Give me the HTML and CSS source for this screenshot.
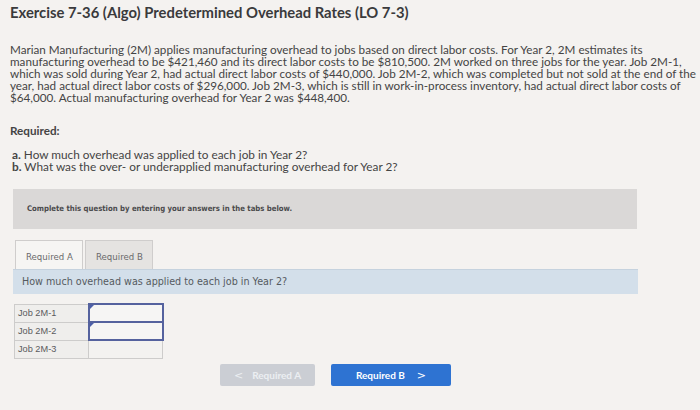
FILE: index.html
```html
<!DOCTYPE html>
<html>
<head>
<meta charset="utf-8">
<link rel="stylesheet" href="styles.css">
</head>
<body>
<div class="page">
  <h1 class="title">Exercise 7-36 (Algo) Predetermined Overhead Rates (LO 7-3)</h1>
  <p class="intro">Marian Manufacturing (2M) applies manufacturing overhead to jobs based on direct labor costs. For Year 2, 2M estimates its<br>manufacturing overhead to be $421,460 and its direct labor costs to be $810,500. 2M worked on three jobs for the year. Job 2M-1,<br>which was sold during Year 2, had actual direct labor costs of $440,000. Job 2M-2, which was completed but not sold at the end of the<br>year, had actual direct labor costs of $296,000. Job 2M-3, which is still in work-in-process inventory, had actual direct labor costs of<br>$64,000. Actual manufacturing overhead for Year 2 was $448,400.</p>
  <p class="req">Required:</p>
  <ul class="qlist">
    <li><b>a.</b> How much overhead was applied to each job in Year 2?</li>
    <li><b>b.</b> What was the over- or underapplied manufacturing overhead for Year 2?</li>
  </ul>
  <div class="notice">Complete this question by entering your answers in the tabs below.</div>
  <div class="tabs">
    <div class="tab active">Required A</div>
    <div class="tab">Required B</div>
  </div>
  <div class="prompt">How much overhead was applied to each job in Year 2?</div>
  <table class="grid">
    <tr><td class="lbl">Job 2M-1</td><td class="inp focus"><span class="mark"></span></td></tr>
    <tr><td class="lbl">Job 2M-2</td><td class="inp focus"><span class="mark"></span></td></tr>
    <tr><td class="lbl">Job 2M-3</td><td class="inp"></td></tr>
  </table>
  <div class="nav">
    <div class="btn disabled"><span class="chev">&lt;</span>Required A</div>
    <div class="btn primary">Required B<span class="chev right">&gt;</span></div>
  </div>
</div>
</body>
</html>
```
FILE: styles.css
```css
html, body {
  margin: 0;
  padding: 0;
  background: #f4f2f0;
}
.page {
  width: 700px;
  height: 410px;
  padding: 0 0 0 10px;
  box-sizing: border-box;
  font-family: Lato, "Liberation Sans", sans-serif;
  color: #3d3d3f;
  overflow: hidden;
}
.title {
  margin: 3px 0 0 0;
  font-size: 14.8px;
  line-height: 18px;
  font-weight: 700;
  color: #3a3a3c;
}
.intro {
  margin: 22px 0 0 0;
  font-size: 11.7px;
  line-height: 12px;
  white-space: nowrap;
  color: #444;
}
.req {
  margin: 21px 0 0 0;
  font-size: 11.7px;
  line-height: 12px;
  font-weight: 700;
  color: #444;
}
.qlist {
  list-style: none;
  margin: 13px 0 0 0;
  padding: 0 0 0 2px;
  font-size: 11.8px;
  line-height: 12px;
  color: #444;
}
.notice {
  margin: 16px 0 0 3px;
  width: 624px;
  height: 40px;
  box-sizing: border-box;
  background: #dad8d7;
  padding: 14px 0 0 14px;
  font-family: "DejaVu Sans Condensed", "DejaVu Sans", sans-serif;
  font-weight: 700;
  font-size: 7.7px;
  line-height: 12px;
  color: #4a4a4c;
}
.tabs {
  display: flex;
  margin: 11px 0 0 5px;
  height: 29px;
}
.tab {
  width: 68px;
  box-sizing: border-box;
  border: 1px solid #cfcdcc;
  border-bottom: none;
  background: #e5e3e1;
  font-family: "DejaVu Sans", sans-serif;
  font-size: 8.6px;
  color: #6a6a6c;
  padding: 11px 0 0 10px;
  margin-right: 2px;
}
.tab.active {
  background: #f6f5f3;
}
.prompt {
  margin: 0 0 0 3px;
  width: 625px;
  height: 25px;
  box-sizing: border-box;
  background: #d3dfea;
  border-top: 1px solid #c5d2de;
  padding: 6px 0 0 9px;
  font-family: "DejaVu Sans", sans-serif;
  font-size: 9.6px;
  line-height: 12px;
  color: #555a60;
}
.grid {
  margin: 9px 0 0 4px;
  border-collapse: collapse;
}
.grid td {
  height: 18px;
  padding: 0;
  box-sizing: border-box;
  border: 1px solid #cdcccb;
}
.lbl {
  width: 74px;
  padding-left: 3px !important;
  font-family: "Liberation Sans", sans-serif;
  font-size: 9.2px;
  color: #5a5a5c;
  background: #efeeec;
}
.inp {
  width: 74px;
  position: relative;
  background: #f3f2f0;
}
.inp.focus {
  border: 2px solid #55629e !important;
  background: #f6f5f4;
}
.mark {
  position: absolute;
  left: 0;
  top: 0;
  width: 0;
  height: 0;
  border-top: 4px solid #4b5ea8;
  border-right: 4px solid transparent;
}
.nav {
  display: flex;
  margin: 5px 0 0 210px;
  gap: 16px;
}
.btn {
  height: 22px;
  box-sizing: border-box;
  font-weight: 700;
  font-size: 10px;
  line-height: 22px;
  text-align: center;
  border-radius: 2px;
}
.chev {
  font-family: "DejaVu Sans", sans-serif;
  font-weight: 400;
  font-size: 11px;
  margin-right: 9px;
}
.chev.right {
  margin-right: 0;
  margin-left: 12px;
}
.btn.disabled {
  width: 95px;
  background: #cbced4;
  color: #eceef2;
}
.btn.primary {
  width: 120px;
  background: #2e73d2;
  color: #ffffff;
}
```
